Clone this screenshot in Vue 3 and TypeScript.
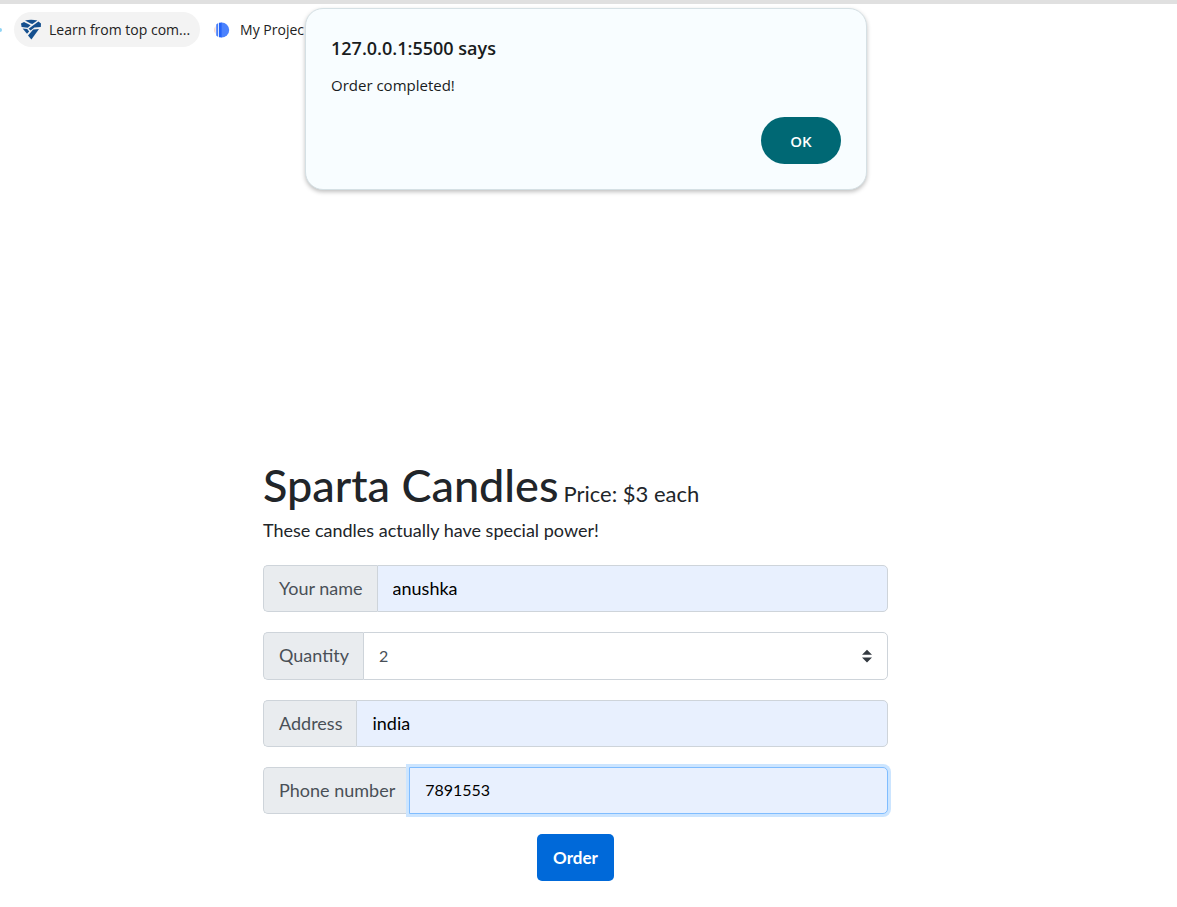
<script setup lang="ts">
import { ref } from 'vue'

const customer = ref('anushka')
const quantity = ref('2')
const address = ref('india')
const phone = ref('7891553')
const quantities: string[] = ['1', '2', '3', '4', '5']
</script>

<template>
  <div class="browser">
    <nav class="bookmarks" aria-label="Bookmarks">
      <span class="edge-icon"></span>
      <a class="bookmark active" href="#">
        <svg width="22" height="22" viewBox="0 0 22 22" fill="#15508f" aria-hidden="true">
          <path d="M5 1.4Q11 .2 17.4 1.4L12.4 5L10.6 4.4Z" />
          <path d="M1 4.6L4 3L10.6 6.2L7.8 8.8L1.6 8Z" />
          <path d="M18.4 2.4L21 4.6L20.8 8L14.4 8.6L10.6 11.6L8.6 9.8Z" />
          <path d="M2.6 9.4L7.2 10L9.2 12.4L7 14.8Z" />
          <path d="M13.2 10.4L19 10L11.4 20.4L8 16.4Z" />
        </svg>
        <span>Learn from top com...</span>
      </a>
      <a class="bookmark" href="#">
        <svg width="18" height="18" viewBox="0 0 18 18" aria-hidden="true">
          <path d="M2.4 5Q.2 9 2.4 13Z" fill="#f3c5b4" />
          <path d="M3.2 3.4L5.2 2V16L3.2 14.6Z" fill="#4c80f8" />
          <path d="M6 1.8L9 1.4V16.6L6 16.2Z" fill="#2464fa" />
          <path d="M8.6 1.4A7.6 7.6 0 0 1 8.6 16.6Z" fill="#4b82fd" />
        </svg>
        <span>My Projec</span>
      </a>
    </nav>

    <dialog class="alert" open aria-labelledby="alert-title">
      <h2 id="alert-title">127.0.0.1:5500 says</h2>
      <p>Order completed!</p>
      <div class="alert-actions"><button type="button">OK</button></div>
    </dialog>

    <main class="page">
      <div class="shop">
        <header>
          <h1><span>Sparta Candles</span> <small>Price: $3 each</small></h1>
          <p>These candles actually have special power!</p>
        </header>
        <form @submit.prevent>
          <div class="group">
            <label for="customer">Your name</label>
            <input id="customer" v-model="customer" type="text" />
          </div>
          <div class="group tall">
            <label for="quantity">Quantity</label>
            <div class="select-box">
              <select id="quantity" v-model="quantity" class="numeric">
                <option v-for="n in quantities" :key="n" :value="n">{{ n }}</option>
              </select>
              <svg class="arrows" width="10" height="14" viewBox="0 0 10 14" fill="#343a40" aria-hidden="true">
                <path d="M0 5.8L5 .8L10 5.8ZM0 8.4H10L5 13.4Z" />
              </svg>
            </div>
          </div>
          <div class="group">
            <label for="address">Address</label>
            <input id="address" v-model="address" type="text" />
          </div>
          <div class="group">
            <label for="phone">Phone number</label>
            <input id="phone" v-model="phone" class="numeric focused" type="text" />
          </div>
          <button class="order" type="submit">Order</button>
        </form>
      </div>
    </main>
  </div>
</template>

<style>
body {
  margin: 0;
  background: #fff;
}
</style>

<style scoped>
* {
  box-sizing: border-box;
}
.browser {
  position: relative;
  border-top: 4px solid #e0e0e0;
  font-family: 'Open Sans', 'Noto Sans', sans-serif;
  color: #212529;
}
.bookmarks {
  display: flex;
  align-items: center;
  height: 51px;
}
.edge-icon {
  width: 2px;
  height: 4px;
  margin-right: 12px;
  border-radius: 0 2px 2px 0;
  background: #8ed4f5;
}
.bookmark {
  display: flex;
  align-items: center;
  gap: 7px;
  height: 35px;
  padding: 0 10px 0 6px;
  border-radius: 18px;
  color: #222;
  font-size: 14px;
  white-space: nowrap;
  text-decoration: none;
}
.bookmark + .bookmark {
  gap: 9px;
  margin-left: 7px;
}
.bookmark.active {
  background: #f3f3f3;
}
.alert {
  position: absolute;
  top: 4px;
  left: 305px;
  width: 562px;
  margin: 0;
  padding: 25px 25px 25px 25px;
  border: 1px solid #d5e0e4;
  border-radius: 18px;
  background: #f8fdff;
  box-shadow: 0 2px 4px rgba(0, 0, 0, 0.25);
  color: #191c1d;
}
.alert h2 {
  margin: 0;
  font-size: 18px;
  font-weight: 600;
  line-height: 28px;
}
.alert p {
  margin: 12px 0 21px;
  font-size: 15px;
  line-height: 22px;
}
.alert-actions {
  display: flex;
  justify-content: flex-end;
}
.alert button {
  width: 80px;
  height: 47px;
  border: 0;
  border-radius: 24px;
  background: #006874;
  color: #fff;
  font: 600 15px 'Open Sans', sans-serif;
}
.page {
  padding: 404px 26px 26px 0;
}
.shop {
  width: 625px;
  max-width: 100%;
  margin: 0 auto;
  font-family: Lato, 'Open Sans', sans-serif;
  font-size: 18px;
}
h1 {
  display: flex;
  align-items: baseline;
  gap: 5px;
  margin: 0;
  font-size: 45px;
  font-weight: 500;
  line-height: 52px;
  white-space: nowrap;
}
h1 small {
  font-size: 22px;
  font-weight: 400;
}
header p {
  margin: 0 0 25px;
  line-height: 20px;
}
form {
  display: flex;
  flex-direction: column;
  gap: 20px;
}
.group {
  display: flex;
  height: 47px;
}
.group.tall {
  height: 48px;
}
label {
  display: flex;
  align-items: center;
  padding: 0 14px 2px 15px;
  border: 1px solid #ced4da;
  border-right: 0;
  border-radius: 5px 0 0 5px;
  background: #e9ecef;
  color: #495057;
  white-space: nowrap;
}
input,
select {
  flex: 1;
  min-width: 0;
  padding: 0 15px 2px;
  border: 1px solid #ced4da;
  border-radius: 0 5px 5px 0;
  background: #e8f0fe;
  color: #000;
  font: inherit;
  outline: 0;
}
.numeric {
  font-size: 16px;
}
.focused {
  border-color: #80bdff;
  box-shadow: 0 0 0 3px #cce5ff;
}
.select-box {
  position: relative;
  display: flex;
  flex: 1;
}
select {
  appearance: none;
  background: #fff;
  color: #495057;
}
.arrows {
  position: absolute;
  top: 50%;
  right: 16px;
  transform: translateY(-50%);
  pointer-events: none;
}
.order {
  align-self: center;
  height: 47px;
  padding: 0 16px;
  border: 0;
  border-radius: 5px;
  background: #0069d9;
  color: #fff;
  font: inherit;
  font-size: 17px;
  font-weight: 700;
}
</style>
